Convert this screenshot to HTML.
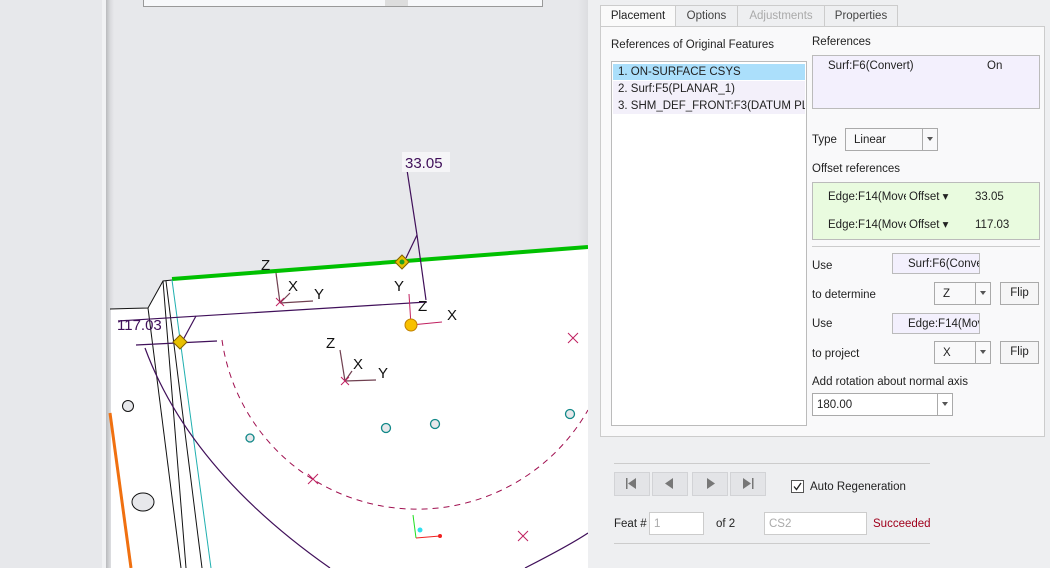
<!DOCTYPE html>
<html><head><meta charset="utf-8"><style>
*{margin:0;padding:0;box-sizing:border-box}
body{width:1050px;height:568px;overflow:hidden;background:#e7e8eb;font-family:"Liberation Sans",sans-serif;font-size:11.5px;color:#222;position:relative}
.a{position:absolute}
.t{position:absolute;white-space:nowrap;line-height:16px}
.panel{left:588px;top:0;width:462px;height:568px;background:#eeeff1}
.tab{position:absolute;top:5px;height:22px;border:1px solid #ccc;border-bottom:none;background:#eeeff1;text-align:center;line-height:20px}
.box{position:absolute;border:1px solid #bbb}
.sel{position:absolute;border:1px solid #aaa;background:#f9f9fa}
.sel .ar{position:absolute;right:0;top:0;bottom:0;width:15px;border-left:1px solid #aaa}
.sel .ar:after{content:"";position:absolute;left:4px;top:8px;border:3.5px solid transparent;border-top:4px solid #555}
.btn{position:absolute;border:1px solid #aaa;background:#f5f5f6;text-align:center}
.nb{position:absolute;top:472px;width:36px;height:24px;background:#e3e4e7;border:1px solid #d2d3d6}
</style></head><body>
<div class="a" style="left:102px;top:0;width:4px;height:568px;background:#f1f2f4"></div>
<div class="a" style="left:106px;top:0;width:8px;height:568px;background:linear-gradient(90deg,#b9babd,#d8d9dc,#e7e8eb)"></div>
<div class="a" style="left:578px;top:0;width:10px;height:568px;background:linear-gradient(90deg,#e7e8eb,#dcdde0)"></div>
<div class="a" style="left:143px;top:-1px;width:400px;height:8px;background:#f7f8fa;border:1px solid #999"></div>
<div class="a" style="left:385px;top:0;width:23px;height:6px;background:#ddd"></div>
<svg class="a" style="left:0;top:0" width="588" height="568" viewBox="0 0 588 568">
<polygon points="172,279 588,247 588,568 111,568 111,309 148,308 163,281" fill="#fff"/>
<line x1="172" y1="279" x2="588" y2="247" stroke="#00c000" stroke-width="4"/>
<g stroke="#111" stroke-width="1" fill="none">
<polyline points="110,309 148,308 163,281 172,280"/>
<line x1="148" y1="308" x2="181" y2="568"/><line x1="163" y1="281" x2="186" y2="568"/><line x1="166" y1="281" x2="202" y2="568"/>
</g>
<line x1="172" y1="280" x2="211" y2="568" stroke="#20b0b0"/>
<line x1="110" y1="413" x2="131" y2="568" stroke="#f07010" stroke-width="3"/>
<g stroke="#40105a" stroke-width="1.2" fill="none">
<polyline points="407,170 417,235 426,300"/><line x1="417" y1="235" x2="406" y2="258"/>
<line x1="118" y1="321" x2="427" y2="302"/>
<line x1="136" y1="345" x2="217" y2="341"/><line x1="183" y1="340" x2="196" y2="316"/>
<path d="M145,348 Q190,470 330,568"/><path d="M525,568 Q570,545 588,533"/>
</g>
<path d="M222,340 A197,197 0 0 0 588,410" stroke="#a01050" stroke-width="1" stroke-dasharray="6,5" fill="none"/>
<rect x="402" y="152" width="48" height="20" fill="#f5f5f7"/>
<text x="405" y="168" font-family="Liberation Sans" font-size="15" fill="#40105a">33.05</text>
<text x="117" y="330" font-family="Liberation Sans" font-size="15" fill="#40105a">117.03</text>
<g font-family="Liberation Sans" font-size="15" fill="#111">
<text x="261" y="270">Z</text><text x="288" y="291">X</text><text x="314" y="299">Y</text>
<text x="394" y="291">Y</text><text x="418" y="311">Z</text><text x="447" y="320">X</text>
<text x="326" y="348">Z</text><text x="353" y="369">X</text><text x="378" y="378">Y</text>
</g>
<g stroke="#704050" stroke-width="1.2">
<line x1="280" y1="303" x2="276" y2="273"/><line x1="280" y1="303" x2="313" y2="301"/>
<line x1="345" y1="381" x2="340" y2="350"/><line x1="345" y1="381" x2="376" y2="380"/>
<line x1="280" y1="303" x2="290" y2="293"/><line x1="345" y1="381" x2="352" y2="371"/>
</g>
<g stroke="#c02060" stroke-width="1">
<path d="M276,298 l8,8 M284,298 l-8,8"/><path d="M341,377 l8,8 M349,377 l-8,8"/>
<path d="M568,333 l10,10 M578,333 l-10,10"/><path d="M308,474 l10,10 M318,474 l-10,10"/><path d="M518,531 l10,10 M528,531 l-10,10"/>
<line x1="411" y1="325" x2="409" y2="294"/><line x1="411" y1="325" x2="442" y2="322"/>
</g>
<circle cx="411" cy="325" r="6" fill="#f8c000" stroke="#c08000"/>
<g fill="#e8c000" stroke="#806000"><path d="M402,255 l7,7 -7,7 -7,-7z"/><path d="M180,335 l7,7 -7,7 -7,-7z"/></g>
<circle cx="402" cy="262" r="2.5" fill="#20a020"/>
<g fill="#e7e8eb" stroke="#111"><ellipse cx="128" cy="406" rx="5.5" ry="5.5"/><ellipse cx="143" cy="502" rx="11" ry="9"/></g>
<g fill="#e7e8eb" stroke="#118888" stroke-width="1.3"><circle cx="250" cy="438" r="4"/><circle cx="386" cy="428" r="4.5"/><circle cx="435" cy="424" r="4.5"/><circle cx="570" cy="414" r="4.5"/></g>
<line x1="416" y1="538" x2="413" y2="515" stroke="#20e020"/><line x1="416" y1="538" x2="440" y2="536" stroke="#f02020"/>
<circle cx="420" cy="530" r="2.5" fill="#30e0f0"/><circle cx="440" cy="536" r="2" fill="#f02020"/>
</svg>
<div class="a panel">
<div class="tab" style="left:12px;width:76px;background:#fafafa">Placement</div>
<div class="tab" style="left:87px;width:63px;color:#444">Options</div>
<div class="tab" style="left:149px;width:88px;color:#aaa">Adjustments</div>
<div class="tab" style="left:236px;width:74px;color:#444">Properties</div>
<div class="box" style="left:12px;top:26px;width:445px;height:411px;background:#f9f9fa;border-color:#ccc"></div>
<div class="t" style="left:23px;top:37px">References of Original Features</div>
<div class="box" style="left:23px;top:61px;width:196px;height:365px;background:#fff"></div>
<div class="a" style="left:25px;top:64px;width:192px;height:16px;background:#abdffb"></div>
<div class="a" style="left:25px;top:81px;width:192px;height:33px;background:#f3f0fa"></div>
<div class="t" style="left:30px;top:64px">1. ON-SURFACE CSYS</div>
<div class="t" style="left:30px;top:81px">2. Surf:F5(PLANAR_1)</div>
<div class="t" style="left:30px;top:98px;width:187px;overflow:hidden">3. SHM_DEF_FRONT:F3(DATUM PLANE)</div>
<div class="t" style="left:224px;top:34px">References</div>
<div class="box" style="left:224px;top:55px;width:228px;height:54px;background:#f3f0fd"></div>
<div class="t" style="left:240px;top:58px">Surf:F6(Convert)</div><div class="t" style="left:399px;top:58px">On</div>
<div class="t" style="left:224px;top:132px">Type</div>
<div class="sel" style="left:257px;top:128px;width:93px;height:23px"><span class="t" style="left:8px;top:3px">Linear</span><div class="ar"></div></div>
<div class="t" style="left:224px;top:161px">Offset references</div>
<div class="box" style="left:224px;top:182px;width:228px;height:58px;background:#e9fbdf"></div>
<div class="t" style="left:240px;top:189px;width:78px;overflow:hidden">Edge:F14(Move)</div><div class="t" style="left:321px;top:189px">Offset ▾</div><div class="t" style="left:387px;top:189px">33.05</div>
<div class="t" style="left:240px;top:217px;width:78px;overflow:hidden">Edge:F14(Move)</div><div class="t" style="left:321px;top:217px">Offset ▾</div><div class="t" style="left:387px;top:217px">117.03</div>
<div class="a" style="left:224px;top:246px;width:228px;height:1px;background:#ccc"></div>
<div class="t" style="left:224px;top:258px">Use</div>
<div class="box" style="left:304px;top:253px;width:88px;height:21px;background:#f3f0fd;overflow:hidden"><span class="t" style="left:15px;top:2px">Surf:F6(Convert)</span></div>
<div class="t" style="left:224px;top:287px">to determine</div>
<div class="sel" style="left:346px;top:282px;width:57px;height:23px"><span class="t" style="left:8px;top:3px">Z</span><div class="ar"></div></div>
<div class="btn" style="left:412px;top:282px;width:39px;height:23px;line-height:21px">Flip</div>
<div class="t" style="left:224px;top:316px">Use</div>
<div class="box" style="left:304px;top:313px;width:88px;height:21px;background:#f3f0fd;overflow:hidden"><span class="t" style="left:15px;top:2px">Edge:F14(Move)</span></div>
<div class="t" style="left:224px;top:346px">to project</div>
<div class="sel" style="left:346px;top:341px;width:57px;height:23px"><span class="t" style="left:8px;top:3px">X</span><div class="ar"></div></div>
<div class="btn" style="left:412px;top:341px;width:39px;height:23px;line-height:21px">Flip</div>
<div class="t" style="left:224px;top:374px">Add rotation about normal axis</div>
<div class="sel" style="left:224px;top:393px;width:141px;height:23px;background:#fff"><span class="t" style="left:4px;top:3px">180.00</span><div class="ar"></div></div>
<div class="a" style="left:26px;top:463px;width:316px;height:1px;background:#ccc"></div>
<div class="nb" style="left:26px"></div><div class="nb" style="left:64px"></div><div class="nb" style="left:104px"></div><div class="nb" style="left:142px"></div>
<svg class="a" style="left:26px;top:472px" width="160" height="24"><g fill="#777"><rect x="12" y="6" width="1.5" height="11"/><path d="M14,11.5 l8,-5.5 v11z"/><path d="M51,11.5 l8,-5.5 v11z"/><path d="M93,6 l8,5.5 -8,5.5z"/><path d="M129,6 l8,5.5 -8,5.5z"/><rect x="138" y="6" width="1.5" height="11"/></g></svg>
<svg class="a" style="left:203px;top:480px" width="13" height="13"><rect x="0.5" y="0.5" width="12" height="12" fill="#fff" stroke="#555"/><path d="M3,6.5 L5.5,9.5 L10,3" stroke="#222" stroke-width="1.3" fill="none"/></svg>
<div class="t" style="left:222px;top:479px">Auto Regeneration</div>
<div class="t" style="left:26px;top:516px">Feat #</div>
<div class="box" style="left:61px;top:512px;width:55px;height:23px;background:#fff;border-color:#ccc"><span class="t" style="left:4px;top:3px;color:#aaa">1</span></div>
<div class="t" style="left:128px;top:516px">of 2</div>
<div class="box" style="left:176px;top:512px;width:103px;height:23px;background:#fff;border-color:#ccc"><span class="t" style="left:4px;top:3px;color:#aaa">CS2</span></div>
<div class="t" style="left:285px;top:516px;color:#a0001c">Succeeded</div>
<div class="a" style="left:26px;top:543px;width:316px;height:1px;background:#ccc"></div>
</div>
</body></html>
